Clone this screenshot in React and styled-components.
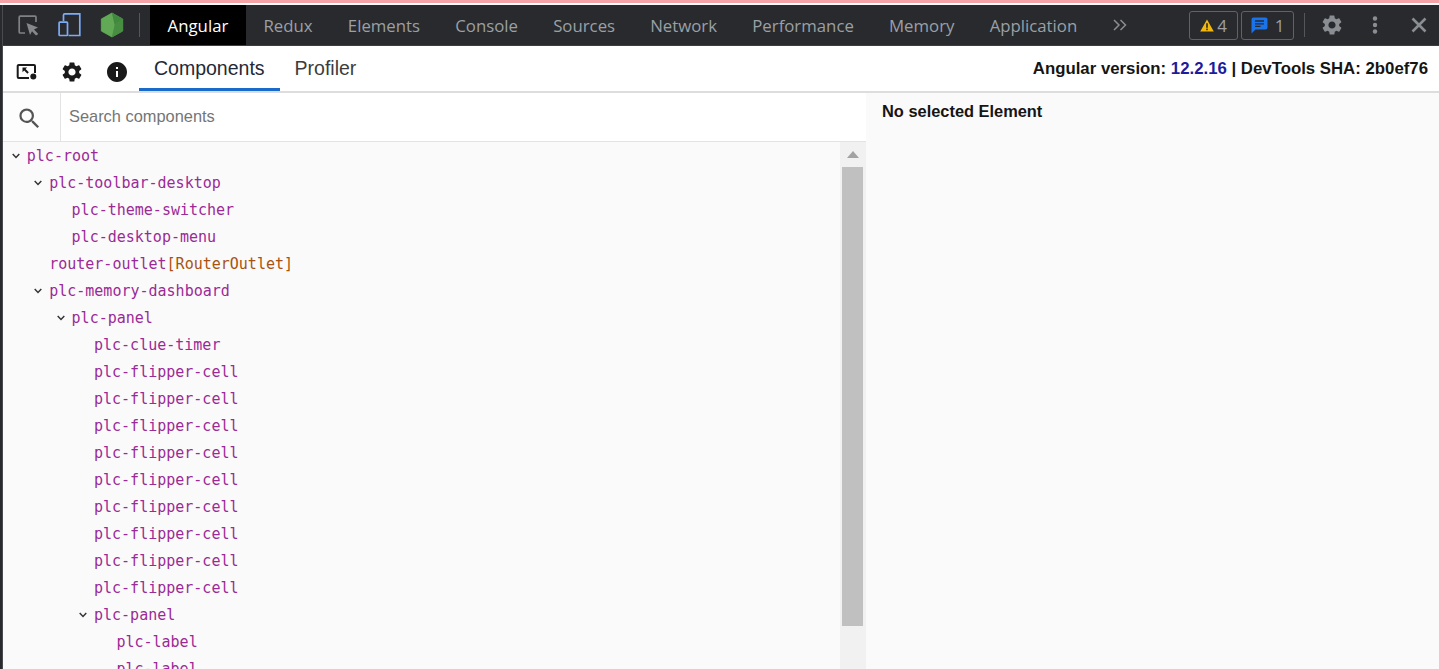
import React from "react";
import styled, { createGlobalStyle } from "styled-components";

const GlobalStyle = createGlobalStyle`
  html, body {
    margin: 0;
    padding: 0;
    height: 100%;
    overflow: hidden;
    background: #fafafa;
    font-family: "Liberation Sans", Arial, sans-serif;
  }
`

const Page = styled.div`
  width: 1439px;
  height: 669px;
  display: flex;
  flex-direction: column;
  overflow: hidden;
`

const TopStrip = styled.div`
  height: 3px;
  flex: none;
  background: #f4a3a6;
  border-bottom: 1px solid #fff;
  margin-bottom: 1px;
`

const Frame = styled.div`
  flex: 1;
  min-height: 0;
  display: flex;
  background: #292a2d;
  padding-left: 2px;
`

const Main = styled.div`
  flex: 1;
  min-width: 0;
  display: flex;
  flex-direction: column;
  border-left: 1px solid #4a4b4e;
`

const Toolbar = styled.div`
  height: 41px;
  flex: none;
  display: flex;
  align-items: center;
  background: #292a2d;
  border-bottom: 1px solid #3d3d3d;
  box-sizing: border-box;
`

const ToolIcon = styled.div`
  width: 24px;
  height: 24px;
  flex: none;
  margin-left: ${props => props.left}px;
  display: flex;
  align-items: center;
  justify-content: center;
`

const Divider = styled.div`
  width: 1px;
  height: 24px;
  flex: none;
  background: #55565a;
  margin: 0 ${props => props.right}px 0 ${props => props.left}px;
`

const TabItem = styled.div`
  height: 40px;
  padding: 0 17.6px;
  flex: none;
  display: flex;
  align-items: center;
  box-sizing: border-box;
  font-family: "Open Sans", "Liberation Sans", sans-serif;
  font-size: 16.8px;
  color: ${props => props.active ? '#fff' : '#9aa0a6'};
  background: ${props => props.active ? '#000' : 'transparent'};
`

const Overflow = styled.div`
  margin-left: 15px;
  width: 20px;
  flex: none;
  display: flex;
  align-items: center;
  justify-content: center;
`

const Spacer = styled.div`
  flex: 1;
`

const Counters = styled.div`
  display: flex;
  gap: 3px;
  flex: none;
`

const Counter = styled.div`
  height: 29px;
  width: ${props => props.width}px;
  flex: none;
  box-sizing: border-box;
  display: flex;
  align-items: center;
  justify-content: center;
  gap: ${props => props.gap}px;
  border: 1px solid #5f6368;
  border-radius: 3px;
  color: #9aa0a6;
  font-family: "Open Sans", "Liberation Sans", sans-serif;
  font-size: 17px;
`

const RightEdge = styled.div`
  width: 8px;
  flex: none;
`

const SubHeader = styled.div`
  height: 47px;
  flex: none;
  display: flex;
  align-items: center;
  background: #fff;
  border-bottom: 2px solid #ddd;
  box-sizing: border-box;
`

const HeaderIcon = styled.div`
  width: 24px;
  height: 24px;
  flex: none;
  margin-left: ${props => props.left}px;
  margin-top: 6px;
  color: #1a1a1a;
`

const SubTabs = styled.div`
  display: flex;
  margin-left: 10px;
  height: 45px;
`

const SubTab = styled.div`
  box-sizing: border-box;
  padding: 2px 15px 0;
  height: 45px;
  display: flex;
  align-items: center;
  font-size: 19.5px;
  color: ${props => props.active ? '#1f2937' : '#3c3c3c'};
  border-bottom: 3px solid ${props => props.active ? '#1a6ac9' : 'transparent'};
`

const VersionInfo = styled.div`
  margin-left: auto;
  margin-right: 11px;
  font-size: 16.8px;
  font-weight: 700;
  color: #151515;
`

const VersionNumber = styled.span`
  color: #1c1c9c;
`

const Body = styled.div`
  flex: 1;
  min-height: 0;
  display: flex;
`

const LeftPane = styled.div`
  width: 863px;
  flex: none;
  display: flex;
  flex-direction: column;
  min-height: 0;
`

const SearchBar = styled.div`
  height: 49px;
  flex: none;
  display: flex;
  box-sizing: border-box;
  background: #fff;
  border-bottom: 1px solid #e3e3e3;
`

const SearchIconCell = styled.div`
  width: 58px;
  flex: none;
  box-sizing: border-box;
  border-right: 1px solid #e3e3e3;
  background: #fdfdfd;
  display: flex;
  align-items: center;
  justify-content: center;
  padding: 2px 5px 0 0;
  color: #555;
`

const SearchInput = styled.input`
  flex: 1;
  border: 0;
  outline: 0;
  padding: 0 8px 2px;
  font-family: "Liberation Sans", Arial, sans-serif;
  font-size: 16.4px;
  background: transparent;
  &::placeholder {
    color: #757575;
    opacity: 1;
  }
`

const TreeArea = styled.div`
  flex: 1;
  min-height: 0;
  display: flex;
`

const TreeList = styled.div`
  flex: 1;
  overflow: hidden;
  background: #fafafa;
`

const TreeRow = styled.div`
  height: 27px;
  display: flex;
  align-items: center;
  padding-left: ${props => 4.8 + props.depth * 22.4}px;
  font-family: "DejaVu Sans Mono", monospace;
  font-size: 15px;
  white-space: pre;
  color: #9a2a96;
`

const Caret = styled.span`
  width: 15px;
  padding-left: 4px;
  flex: none;
  display: flex;
  align-items: center;
  color: #333;
`

const Directive = styled.span`
  color: #a9520f;
`

const Scrollbar = styled.div`
  width: 26px;
  flex: none;
  box-sizing: border-box;
  background: #f1f1f1;
  padding: 0 3px 0 2px;
`

const ScrollArrow = styled.div`
  height: 25px;
  display: flex;
  align-items: center;
  justify-content: center;
`

const ScrollThumb = styled.div`
  height: 459px;
  background: #c0c0c0;
`

const RightPane = styled.div`
  flex: 1;
  padding: 9px 16px;
  background: #fafafa;
  font-size: 16.4px;
  font-weight: 700;
  color: #151515;
`

const tabs = ["Redux", "Elements", "Console", "Sources", "Network", "Performance", "Memory", "Application"]

const nodes = [
  { name: "plc-root", depth: 0, open: true },
  { name: "plc-toolbar-desktop", depth: 1, open: true },
  { name: "plc-theme-switcher", depth: 2 },
  { name: "plc-desktop-menu", depth: 2 },
  { name: "router-outlet", directive: "[RouterOutlet]", depth: 1 },
  { name: "plc-memory-dashboard", depth: 1, open: true },
  { name: "plc-panel", depth: 2, open: true },
  { name: "plc-clue-timer", depth: 3 },
  ...Array.from({ length: 9 }, () => ({ name: "plc-flipper-cell", depth: 3 })),
  { name: "plc-panel", depth: 3, open: true },
  { name: "plc-label", depth: 4 },
  { name: "plc-label", depth: 4 },
]

function Chevron() {
  return (
    <svg width="8" height="6" viewBox="0 0 8 6" fill="none" stroke="currentColor" strokeWidth="1.5">
      <path d="M0.7 1 L4 4.4 L7.3 1" />
    </svg>
  )
}

function InspectIcon() {
  return (
    <svg width="24" height="24" viewBox="0 0 24 24" fill="none">
      <path d="M9 20H4.2a1 1 0 0 1-1-1V4.2a1 1 0 0 1 1-1H19a1 1 0 0 1 1 1V9" stroke="#7f8184" strokeWidth="1.7" />
      <path d="M10.5 10 L22 14.5 L18 16.5 L22.3 21 L20 22.6 L16 18.2 L14 22 Z" fill="#85878a" />
    </svg>
  )
}

function DeviceIcon() {
  return (
    <svg width="24" height="24" viewBox="0 0 24 24" fill="none" stroke="#7cacf8" strokeWidth="1.7">
      <path d="M6.5 8V2A1.2 1.2 0 0 1 7.7 0.9H22.8V22.5H11.5" />
      <rect x="2.1" y="9.1" width="8.4" height="13.4" rx="0.8" />
    </svg>
  )
}

function NodeIcon() {
  return (
    <svg width="26" height="28" viewBox="0 0 26 28">
      <path d="M13 1 L24.6 7.5 V20.5 L13 27 L1.4 20.5 V7.5 Z" fill="#4f9548" stroke="#4f9548" strokeWidth="1" strokeLinejoin="round" />
      <path d="M13 1 L1.4 7.5 V20.5 L13 27 L16 14 Z" fill="#62a955" />
      <path d="M13 1 L24.6 7.5 L16 14 Z" fill="#41893f" />
      <path d="M16 14 L13 27 L24.6 20.5 V7.5 Z" fill="#478e43" />
    </svg>
  )
}

function MoreTabs() {
  return (
    <svg width="14" height="12" viewBox="0 0 14 12" fill="none" stroke="#8a8d91" strokeWidth="1.5">
      <path d="M1 1 L6 6 L1 11 M7.5 1 L12.5 6 L7.5 11" />
    </svg>
  )
}

function WarningIcon() {
  return (
    <svg width="14" height="13" viewBox="0 0 14 13">
      <path d="M7 0.5 L13.8 12.5 H0.2 Z" fill="#f2b90c" />
      <rect x="6.2" y="4.2" width="1.6" height="4.6" fill="#292a2d" />
      <rect x="6.2" y="9.6" width="1.6" height="1.6" fill="#292a2d" />
    </svg>
  )
}

function MessageIcon() {
  return (
    <svg width="17" height="17" viewBox="0 0 17 17">
      <path d="M2.5 0.5H14.5a2 2 0 0 1 2 2V10.5a2 2 0 0 1-2 2H4.5L0.5 16.5V2.5a2 2 0 0 1 2-2Z" fill="#1a73e8" />
      <path d="M4 4H13M4 6.8H13M4 9.4H9.5" stroke="#292a2d" strokeWidth="1.3" />
    </svg>
  )
}

function GearIcon({ size = 24, color = "currentColor" }) {
  return (
    <svg width={size} height={size} viewBox="0 0 24 24" fill={color}>
      <path d="M19.14 12.94c.04-.3.06-.61.06-.94 0-.32-.02-.64-.07-.94l2.03-1.58a.49.49 0 0 0 .12-.61l-1.92-3.32a.49.49 0 0 0-.59-.22l-2.39.96c-.5-.38-1.03-.7-1.62-.94l-.36-2.54a.48.48 0 0 0-.48-.41h-3.84c-.24 0-.43.17-.47.41l-.36 2.54c-.59.24-1.13.57-1.62.94l-2.39-.96a.49.49 0 0 0-.59.22L2.74 8.87c-.12.21-.08.47.12.61l2.03 1.58c-.05.3-.09.63-.09.94s.02.64.07.94l-2.03 1.58a.49.49 0 0 0-.12.61l1.92 3.32c.12.22.37.29.59.22l2.39-.96c.5.38 1.03.7 1.62.94l.36 2.54c.05.24.24.41.48.41h3.84c.24 0 .44-.17.47-.41l.36-2.54c.59-.24 1.13-.56 1.62-.94l2.39.96c.22.08.47 0 .59-.22l1.92-3.32c.12-.22.07-.47-.12-.61l-2.01-1.58zM12 15.6c-1.98 0-3.6-1.62-3.6-3.6s1.62-3.6 3.6-3.6 3.6 1.62 3.6 3.6-1.62 3.6-3.6 3.6z" />
    </svg>
  )
}

function KebabIcon() {
  return (
    <svg width="24" height="24" viewBox="0 0 24 24" fill="#8a8d91">
      <circle cx="12" cy="5.5" r="2.2" />
      <circle cx="12" cy="12" r="2.2" />
      <circle cx="12" cy="18.5" r="2.2" />
    </svg>
  )
}

function CloseIcon() {
  return (
    <svg width="24" height="24" viewBox="0 0 24 24" fill="none" stroke="#8a8d91" strokeWidth="2.6">
      <path d="M5.5 5.5 L18.5 18.5 M18.5 5.5 L5.5 18.5" />
    </svg>
  )
}

function PreviewIcon() {
  return (
    <svg width="24" height="24" viewBox="0 0 24 24" fill="none">
      <path d="M14 18H3.7A1 1 0 0 1 2.7 17V6A1 1 0 0 1 3.7 5H19A1 1 0 0 1 20 6V13" stroke="#1a1a1a" strokeWidth="2" />
      <path d="M7.5 7.5H12.2L10.6 9.1 L13.8 12.3 L12.4 13.7 L9.2 10.5 L7.5 12.2Z" fill="#1a1a1a" />
      <circle cx="18.3" cy="16.4" r="3" fill="#1a1a1a" />
    </svg>
  )
}

function InfoIcon() {
  return (
    <svg width="24" height="24" viewBox="0 0 24 24" fill="currentColor">
      <path d="M12 2C6.48 2 2 6.48 2 12s4.48 10 10 10 10-4.48 10-10S17.52 2 12 2zm1 15h-2v-6h2v6zm0-8h-2V7h2v2z" />
    </svg>
  )
}

function SearchIcon() {
  return (
    <svg width="27" height="27" viewBox="0 0 24 24" fill="currentColor">
      <path d="M15.5 14h-.79l-.28-.27A6.47 6.47 0 0 0 16 9.5 6.5 6.5 0 1 0 9.5 16c1.61 0 3.09-.59 4.23-1.57l.27.28v.79l5 4.99L20.49 19l-4.99-5zm-6 0C7.01 14 5 11.99 5 9.5S7.01 5 9.5 5 14 7.01 14 9.5 11.99 14 9.5 14z" />
    </svg>
  )
}

export default function App() {
  return (
    <>
      <GlobalStyle />
      <Page>
        <TopStrip />
        <Frame>
          <Main>
            <Toolbar>
              <ToolIcon left={13}><InspectIcon /></ToolIcon>
              <ToolIcon left={17}><DeviceIcon /></ToolIcon>
              <ToolIcon left={19}><NodeIcon /></ToolIcon>
              <Divider left={15} right={10} />
              <TabItem active>Angular</TabItem>
              {tabs.map(t => <TabItem key={t}>{t}</TabItem>)}
              <Overflow><MoreTabs /></Overflow>
              <Spacer />
              <Counters>
                <Counter width={49} gap={3}><WarningIcon />4</Counter>
                <Counter width={53} gap={7}><MessageIcon />1</Counter>
              </Counters>
              <Divider left={10} right={15} />
              <ToolIcon left={0}><GearIcon color="#8a8d91" /></ToolIcon>
              <ToolIcon left={19}><KebabIcon /></ToolIcon>
              <ToolIcon left={20}><CloseIcon /></ToolIcon>
              <RightEdge />
            </Toolbar>
            <SubHeader>
              <HeaderIcon left={12}><PreviewIcon /></HeaderIcon>
              <HeaderIcon left={21}><GearIcon /></HeaderIcon>
              <HeaderIcon left={21}><InfoIcon /></HeaderIcon>
              <SubTabs>
                <SubTab active>Components</SubTab>
                <SubTab>Profiler</SubTab>
              </SubTabs>
              <VersionInfo>
                Angular version: <VersionNumber>12.2.16</VersionNumber> | DevTools SHA: 2b0ef76
              </VersionInfo>
            </SubHeader>
            <Body>
              <LeftPane>
                <SearchBar>
                  <SearchIconCell><SearchIcon /></SearchIconCell>
                  <SearchInput placeholder="Search components" />
                </SearchBar>
                <TreeArea>
                  <TreeList>
                    {nodes.map((n, i) => (
                      <TreeRow key={i} depth={n.depth}>
                        <Caret>{n.open && <Chevron />}</Caret>
                        {n.name}
                        {n.directive && <Directive>{n.directive}</Directive>}
                      </TreeRow>
                    ))}
                  </TreeList>
                  <Scrollbar>
                    <ScrollArrow>
                      <svg width="12" height="7" viewBox="0 0 12 7"><path d="M6 0 L12 7 H0 Z" fill="#a3a3a3" /></svg>
                    </ScrollArrow>
                    <ScrollThumb />
                  </Scrollbar>
                </TreeArea>
              </LeftPane>
              <RightPane>No selected Element</RightPane>
            </Body>
          </Main>
        </Frame>
      </Page>
    </>
  )
}
